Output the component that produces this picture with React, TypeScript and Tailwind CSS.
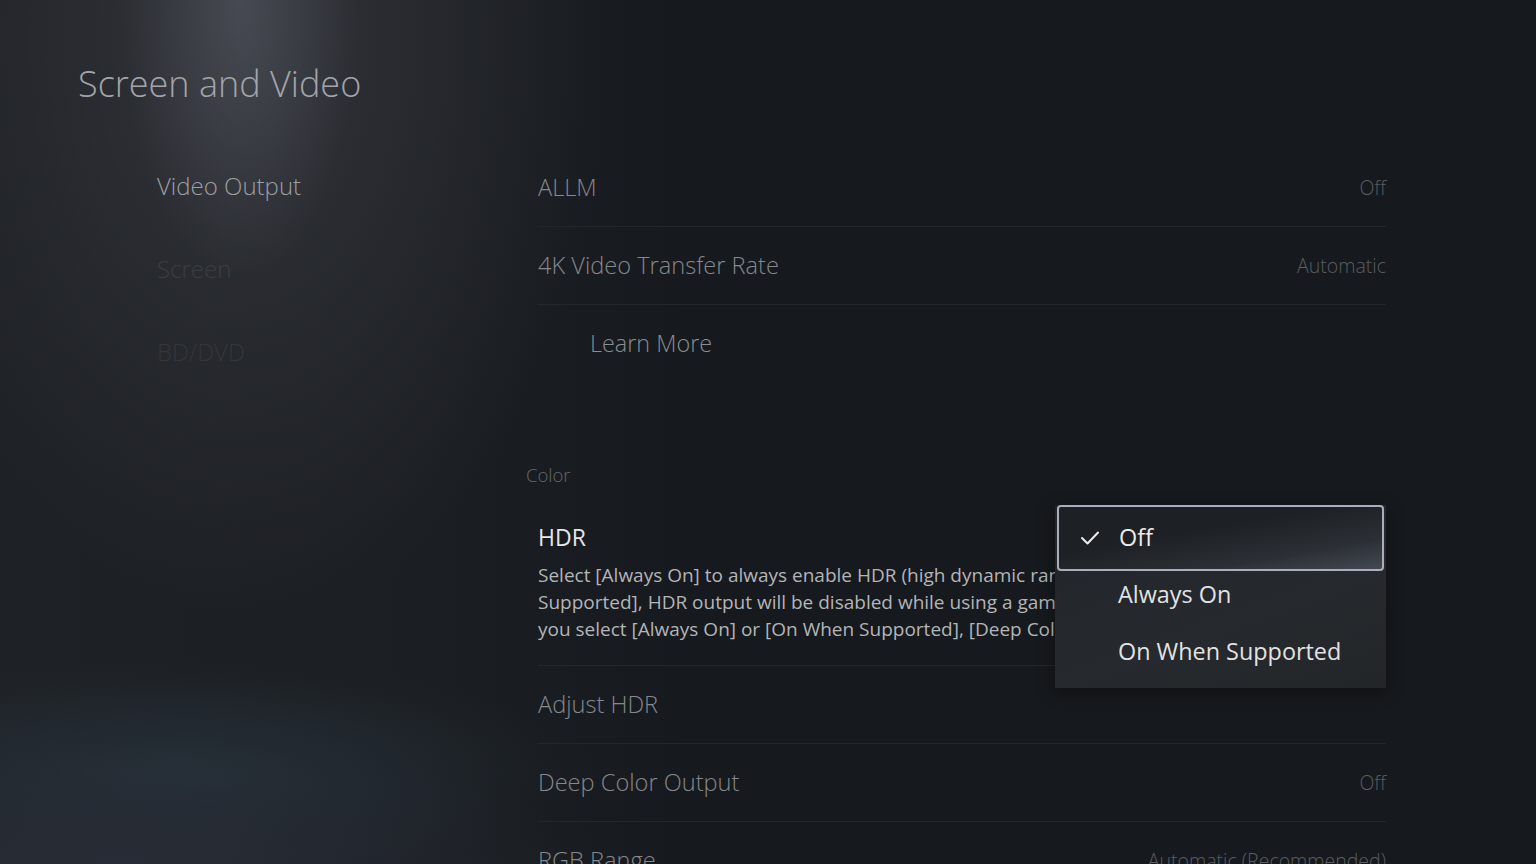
const rowsTop = [
  { label: "ALLM", value: "Off" },
  { label: "4K Video Transfer Rate", value: "Automatic" },
];

const rowsBottom = [
  { label: "Adjust HDR", value: "" },
  { label: "Deep Color Output", value: "Off" },
  { label: "RGB Range", value: "Automatic (Recommended)" },
];

const nav = [
  { label: "Video Output", color: "text-[#9c9fa3]" },
  { label: "Screen", color: "text-[#3a3e43]" },
  { label: "BD/DVD", color: "text-[#33373b]" },
];

function Row({ label, value, border = true }: { label: string; value: string; border?: boolean }) {
  return (
    <div
      className={`flex h-[78px] items-center justify-between ${border ? "border-b border-[#23262a]" : ""}`}
    >
      <span className="text-[23.6px] font-light text-[#85888c]">{label}</span>
      {value && <span className="text-[19.5px] font-light text-[#5a5d61]">{value}</span>}
    </div>
  );
}

function Check() {
  return (
    <svg width="20" height="16" viewBox="0 0 20 16" fill="none">
      <polyline points="2,8 7.5,13.5 18,2.5" stroke="#ececec" strokeWidth="2" strokeLinecap="round" strokeLinejoin="round" />
    </svg>
  );
}

export default function App() {
  return (
    <div className="relative h-[864px] w-[1536px] overflow-hidden bg-[#16191d] font-['Open_Sans','Noto_Sans',sans-serif]">
      {/* background light */}
      <div className="absolute inset-0 bg-[linear-gradient(90deg,#1e2125_0px,#1b1e22_420px,rgba(22,25,29,0)_700px)]" />
      <div className="absolute inset-0 bg-[radial-gradient(ellipse_360px_580px_at_250px_40px,rgba(70,72,80,0.5),rgba(70,72,80,0)_100%)]" />
      <div className="absolute inset-0 bg-[radial-gradient(ellipse_120px_280px_at_240px_0px,rgba(90,92,102,0.55),rgba(90,92,102,0)_100%)]" />
      <div className="absolute inset-0 bg-[radial-gradient(ellipse_420px_110px_at_180px_770px,rgba(40,52,62,0.75),rgba(40,52,62,0)_100%)]" />
      <div className="absolute inset-0 bg-[radial-gradient(ellipse_500px_140px_at_120px_880px,rgba(44,48,60,0.8),rgba(44,48,60,0)_100%)]" />

      <div className="relative">
        <h1 className="pl-[78px] pt-[60px] text-[36px] font-light leading-[48px] text-[#a2a5ab]">
          Screen and Video
        </h1>

        <div className="mt-[37px] flex">
          <nav className="-mt-[1px] w-[538px] pl-[157px]">
            {nav.map((n) => (
              <div key={n.label} className={`flex h-[83px] items-center text-[24px] font-light ${n.color}`}>
                {n.label}
              </div>
            ))}
          </nav>

          <div className="w-[848px] pt-[4px]">
            {rowsTop.map((r) => (
              <Row key={r.label} {...r} />
            ))}
            <div className="flex h-[78px] items-center pl-[52px] text-[23.4px] font-light text-[#8a8d91]">
              Learn More
            </div>

            <div className="ml-[-12px] mt-[77px] flex h-[30px] items-center text-[18.5px] font-light text-[#66696d]">
              Color
            </div>

            <div className="border-b border-[#23262a] pb-[22px] pt-[31px]">
              <div className="text-[23px] leading-[32px] text-[#e6e6e6]">HDR</div>
              <div className="mt-[9px] overflow-hidden text-[19px] leading-[27px] text-[#b3b5b8]">
                <div className="whitespace-nowrap">
                  Select [Always On] to always enable HDR (high dynamic range) output for compatible content. If you select [On When
                </div>
                <div className="whitespace-nowrap">
                  Supported], HDR output will be disabled while using a game or app that doesn't support HDR. When
                </div>
                <div className="whitespace-nowrap">
                  you select [Always On] or [On When Supported], [Deep Color Output] is set to [Automatic].
                </div>
              </div>
            </div>

            {rowsBottom.map((r) => (
              <Row key={r.label} {...r} />
            ))}
          </div>
        </div>
      </div>

      {/* dropdown */}
      <div className="absolute left-[1055px] top-[505px] w-[331px] bg-[linear-gradient(160deg,#212428,#26292d_60%,#232629)] pb-[3px] shadow-[0_4px_16px_rgba(0,0,0,0.35)]">
        <div className="mx-[2px] flex h-[66px] items-center gap-[19px] rounded-[4px] border-2 border-[#a9adbe] bg-[linear-gradient(170deg,#1d2024_40%,#2c3036_75%,#434952)] pl-[21px]">
          <Check />
          <span className="text-[23.4px] text-[#ececec]">Off</span>
        </div>
        <div className="flex h-[48px] items-center pl-[63px] text-[23.4px] text-[#e2e2e2]">Always On</div>
        <div className="flex h-[66px] items-center pl-[63px] text-[23.4px] text-[#e2e2e2]">On When Supported</div>
      </div>
    </div>
  );
}
